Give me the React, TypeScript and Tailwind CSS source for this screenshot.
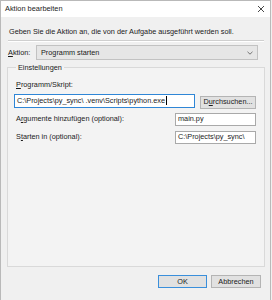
const FONT = { fontFamily: '"Liberation Sans", Arial, sans-serif' };

function U({ children }: { children: string }) {
  return <span className="underline decoration-[0.5px] underline-offset-[1px]">{children}</span>;
}

function Field({ value, focused, className }: { value: string; focused?: boolean; className: string }) {
  return (
    <div
      className={
        "flex items-center bg-white px-[2px] text-[7.3px] leading-none text-[#1b1b1b] " +
        (focused ? "border border-[#2f86d6] " : "border border-[#a9a9a9] ") +
        className
      }
    >
      <span className="whitespace-nowrap">{value}</span>
      {focused && <span className="ml-[0.5px] h-[9px] w-px bg-black" />}
    </div>
  );
}

function Btn({ children, primary, className }: { children: React.ReactNode; primary?: boolean; className: string }) {
  return (
    <div
      className={
        "flex items-center justify-center bg-[#e1e1e1] text-[7.3px] leading-none text-[#1b1b1b] " +
        (primary ? "border-[1.5px] border-[#3a8fdb] " : "border border-[#b4b4b4] ") +
        className
      }
    >
      {children}
    </div>
  );
}

export default function App() {
  return (
    <div className="h-[300px] w-[272px] overflow-hidden bg-[#f0f0f0]" style={FONT}>
      <div className="flex h-full w-[271px] flex-col border-l border-r border-t border-[#b9b9b9]">
        {/* title bar */}
        <div className="flex h-[16px] items-center justify-between bg-white pl-[4px] pr-[5px] text-[7.4px] text-[#222]">
          <span>Aktion bearbeiten</span>
          <svg width="8" height="8" viewBox="0 0 8 8" className="text-[#333]">
            <path d="M1 1 L7 7 M7 1 L1 7" stroke="currentColor" strokeWidth="0.9" />
          </svg>
        </div>

        <div className="flex flex-1 flex-col pl-[6px] pr-[6px] text-[7.3px] leading-none text-[#1a1a1a]">
          <div className="pl-[2px] pt-[11px]">Geben Sie die Aktion an, die von der Aufgabe ausgeführt werden soll.</div>
          <div className="ml-[1px] mt-[5px] h-[2px] border-b border-t border-b-white border-t-[#cfcfcf]" />

          {/* Aktion combo */}
          <div className="mt-[3px] flex items-center">
            <span className="w-[29px] pl-[1px]">
              <U>A</U>ktion:
            </span>
            <div className="flex h-[15px] w-[222px] items-center justify-between border border-[#c2c2c2] bg-[#e6e6e6] pl-[4px] pr-[4px]">
              <span>Programm starten</span>
              <svg width="6" height="4" viewBox="0 0 6 4">
                <path d="M0.5 0.8 L3 3.2 L5.5 0.8" fill="none" stroke="#555" strokeWidth="0.8" />
              </svg>
            </div>
          </div>

          {/* Einstellungen group */}
          <fieldset className="mt-[3px] h-[204px] w-[258px] border border-[#d9d9d9] bg-[#f3f3f3] pl-[6px] pr-[8px]">
            <legend className="ml-[2px] px-[2px] text-[7.3px] leading-[9px]">Einstellungen</legend>
            <div className="pl-[2px] pt-[9px]">
              <U>P</U>rogramm/Skript:
            </div>
            <div className="mt-[5px] flex items-start justify-between">
              <Field value="C:\Projects\py_sync\ .venv\Scripts\python.exe" focused className="h-[14px] w-[181px]" />
              <Btn className="mt-[2px] h-[13px] w-[56px]">
                D<U>u</U>rchsuchen...
              </Btn>
            </div>
            <div className="mt-[4px] flex items-center justify-between">
              <span className="pl-[2px]">
                A<U>r</U>gumente hinzufügen (optional):
              </span>
              <Field value="main.py" className="h-[13px] w-[81px]" />
            </div>
            <div className="mt-[5px] flex items-center justify-between">
              <span className="pl-[2px]">
                S<U>t</U>arten in (optional):
              </span>
              <Field value="C:\Projects\py_sync\" className="h-[13px] w-[81px]" />
            </div>
          </fieldset>

          {/* footer buttons */}
          <div className="mt-[8px] flex justify-end gap-[4px] pr-[3px]">
            <Btn primary className="h-[13px] w-[49px]">
              OK
            </Btn>
            <Btn className="h-[13px] w-[50px]">Abbrechen</Btn>
          </div>
        </div>
      </div>
    </div>
  );
}
